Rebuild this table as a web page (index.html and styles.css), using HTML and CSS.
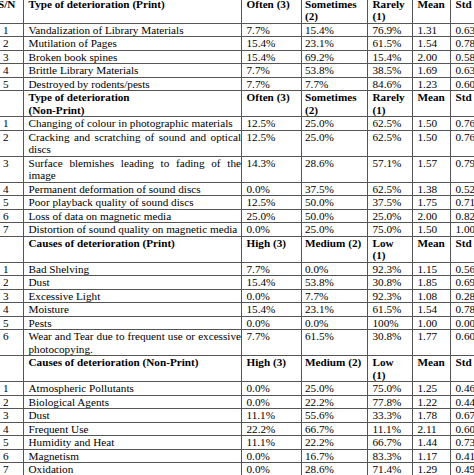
FILE: index.html
```html
<!DOCTYPE html>
<html>
<head>
<meta charset="utf-8">
<link rel="stylesheet" href="styles.css">
</head>
<body>
<table class="data">
<colgroup>
<col class="c-sn"><col class="c-item"><col class="c-a"><col class="c-b"><col class="c-c"><col class="c-mean"><col class="c-std">
</colgroup>
<tbody>
<tr class="head"><td class="sn-head">S/N</td><td>Type of deterioration (Print)</td><td>Often (3)</td><td>Sometimes<br>(2)</td><td>Rarely<br>(1)</td><td>Mean</td><td>Std</td></tr>
<tr><td>1</td><td>Vandalization of Library Materials</td><td>7.7%</td><td>15.4%</td><td>76.9%</td><td>1.31</td><td>0.63</td></tr>
<tr><td>2</td><td>Mutilation of Pages</td><td>15.4%</td><td>23.1%</td><td>61.5%</td><td>1.54</td><td>0.78</td></tr>
<tr><td>3</td><td>Broken book spines</td><td>15.4%</td><td>69.2%</td><td>15.4%</td><td>2.00</td><td>0.58</td></tr>
<tr><td>4</td><td>Brittle Library Materials</td><td>7.7%</td><td>53.8%</td><td>38.5%</td><td>1.69</td><td>0.63</td></tr>
<tr><td>5</td><td>Destroyed by rodents/pests</td><td>7.7%</td><td>7.7%</td><td>84.6%</td><td>1.23</td><td>0.60</td></tr>
<tr class="head"><td></td><td>Type of deterioration<br>(Non-Print)</td><td>Often (3)</td><td>Sometimes<br>(2)</td><td>Rarely<br>(1)</td><td>Mean</td><td>Std</td></tr>
<tr><td>1</td><td>Changing of colour in photographic materials</td><td>12.5%</td><td>25.0%</td><td>62.5%</td><td>1.50</td><td>0.76</td></tr>
<tr><td>2</td><td>Cracking and scratching of sound and optical discs</td><td>12.5%</td><td>25.0%</td><td>62.5%</td><td>1.50</td><td>0.76</td></tr>
<tr><td>3</td><td>Surface blemishes leading to fading of the image</td><td>14.3%</td><td>28.6%</td><td>57.1%</td><td>1.57</td><td>0.79</td></tr>
<tr><td>4</td><td>Permanent deformation of sound discs</td><td>0.0%</td><td>37.5%</td><td>62.5%</td><td>1.38</td><td>0.52</td></tr>
<tr><td>5</td><td>Poor playback quality of sound discs</td><td>12.5%</td><td>50.0%</td><td>37.5%</td><td>1.75</td><td>0.71</td></tr>
<tr><td>6</td><td>Loss of data on magnetic media</td><td>25.0%</td><td>50.0%</td><td>25.0%</td><td>2.00</td><td>0.82</td></tr>
<tr><td>7</td><td>Distortion of sound quality on magnetic media</td><td>0.0%</td><td>25.0%</td><td>75.0%</td><td>1.50</td><td>1.00</td></tr>
<tr class="head"><td></td><td>Causes of deterioration (Print)</td><td>High (3)</td><td>Medium (2)</td><td>Low<br>(1)</td><td>Mean</td><td>Std</td></tr>
<tr><td>1</td><td>Bad Shelving</td><td>7.7%</td><td>0.0%</td><td>92.3%</td><td>1.15</td><td>0.56</td></tr>
<tr><td>2</td><td>Dust</td><td>15.4%</td><td>53.8%</td><td>30.8%</td><td>1.85</td><td>0.69</td></tr>
<tr><td>3</td><td>Excessive Light</td><td>0.0%</td><td>7.7%</td><td>92.3%</td><td>1.08</td><td>0.28</td></tr>
<tr><td>4</td><td>Moisture</td><td>15.4%</td><td>23.1%</td><td>61.5%</td><td>1.54</td><td>0.78</td></tr>
<tr><td>5</td><td>Pests</td><td>0.0%</td><td>0.0%</td><td>100%</td><td>1.00</td><td>0.00</td></tr>
<tr><td>6</td><td>Wear and Tear due to frequent use or excessive photocopying.</td><td>7.7%</td><td>61.5%</td><td>30.8%</td><td>1.77</td><td>0.60</td></tr>
<tr class="head"><td></td><td>Causes of deterioration (Non-Print)</td><td>High (3)</td><td>Medium (2)</td><td>Low<br>(1)</td><td>Mean</td><td>Std</td></tr>
<tr><td>1</td><td>Atmospheric Pollutants</td><td>0.0%</td><td>25.0%</td><td>75.0%</td><td>1.25</td><td>0.46</td></tr>
<tr><td>2</td><td>Biological Agents</td><td>0.0%</td><td>22.2%</td><td>77.8%</td><td>1.22</td><td>0.44</td></tr>
<tr><td>3</td><td>Dust</td><td>11.1%</td><td>55.6%</td><td>33.3%</td><td>1.78</td><td>0.67</td></tr>
<tr><td>4</td><td>Frequent Use</td><td>22.2%</td><td>66.7%</td><td>11.1%</td><td>2.11</td><td>0.60</td></tr>
<tr><td>5</td><td>Humidity and Heat</td><td>11.1%</td><td>22.2%</td><td>66.7%</td><td>1.44</td><td>0.73</td></tr>
<tr><td>6</td><td>Magnetism</td><td>0.0%</td><td>16.7%</td><td>83.3%</td><td>1.17</td><td>0.41</td></tr>
<tr><td>7</td><td>Oxidation</td><td>0.0%</td><td>28.6%</td><td>71.4%</td><td>1.29</td><td>0.49</td></tr>
</tbody>
</table>
</body>
</html>
```

FILE: styles.css
```css
html, body {
  margin: 0;
  padding: 0;
  overflow: hidden;
  background: #ffffff;
}
body {
  font-family: "Liberation Serif", "Times New Roman", serif;
  font-size: 11.2px;
  line-height: 12.5px;
  color: #000000;
}
.data {
  border-collapse: collapse;
  table-layout: fixed;
  width: 490px;
  margin: -3.5px 0 0 -5px;
}
.c-sn { width: 28px; }
.c-item { width: 218px; }
.c-a { width: 60px; }
.c-b { width: 66px; }
.c-c { width: 45px; }
.c-mean { width: 38px; }
.c-std { width: 35px; }
.data td {
  border: 1px solid #555555;
  padding: 0 0 0 4.5px;
  vertical-align: top;
  text-align: left;
  white-space: normal;
}
.data td:nth-child(2) {
  text-align: justify;
}
.data td:nth-child(1) {
  padding-left: 7px;
}
.data td.sn-head {
  padding-left: 2px;
}
.data td:nth-child(4) {
  padding-left: 3px;
}
.head td {
  font-weight: bold;
}
.data td:nth-child(7) {
  white-space: nowrap;
}
```
